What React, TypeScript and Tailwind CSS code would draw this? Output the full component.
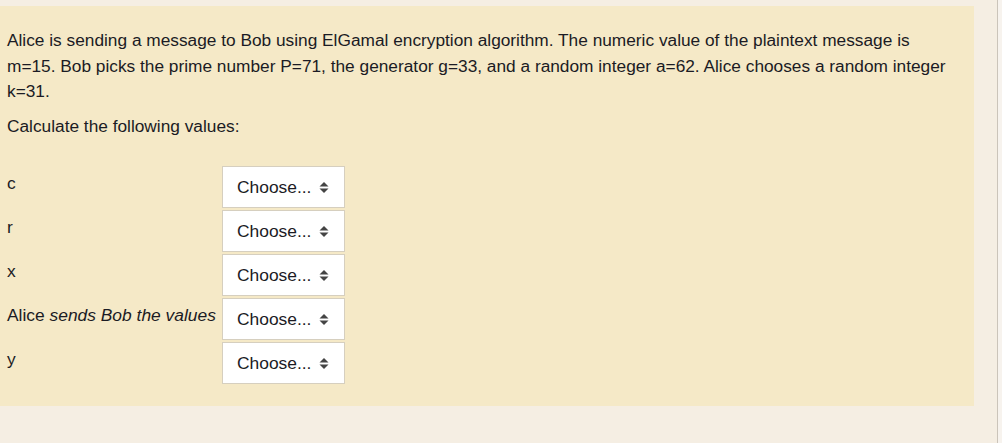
import React from "react";

const rows: { label: React.ReactNode }[] = [
  { label: "c" },
  { label: "r" },
  { label: "x" },
  {
    label: (
      <>
        Alice <em>sends Bob the values</em>
      </>
    ),
  },
  { label: "y" },
];

function Select() {
  return (
    <div className="flex h-[42px] w-[123px] shrink-0 items-center border border-[#d6cfbf] bg-white pl-[14px] text-[17.4px] text-[#1b1b24]">
      <span>Choose...</span>
      <svg width="10" height="13" viewBox="0 0 10 13" className="ml-[8px]">
        <path d="M5 1 L9.5 5.5 L0.5 5.5 Z" fill="#444" />
        <path d="M5 12 L9.5 7.5 L0.5 7.5 Z" fill="#444" />
      </svg>
    </div>
  );
}

export default function App() {
  return (
    <div
      className="flex h-[443px] w-[1002px] bg-[#f5eee3] text-[#1b1b24]"
      style={{ fontFamily: '"Liberation Sans", Arial, sans-serif' }}
    >
      <div className="flex-1 pt-[6px]">
        <div className="w-[974px] bg-[#f5e9c7] pb-[22px] pl-[7px] pt-[22px]">
          <p className="whitespace-nowrap text-[17.3px] leading-[25.5px]">
            Alice is sending a message to Bob using ElGamal encryption algorithm. The numeric value of the plaintext
            message is
            <br />
            m=15. Bob picks the prime number P=71, the generator g=33, and a random integer a=62. Alice chooses a
            random integer
            <br />
            k=31.
          </p>
          <p className="mt-[9px] text-[17.3px] leading-[25.5px]">Calculate the following values:</p>
          <div className="mt-[27px] flex flex-col gap-[2px]">
            {rows.map((r, i) => (
              <div key={i} className="flex items-start">
                <div className="w-[215px] whitespace-nowrap pt-[5px] text-[17.4px] leading-[25px]">{r.label}</div>
                <Select />
              </div>
            ))}
          </div>
        </div>
      </div>
      <div className="w-[1px] bg-[#cbc4ba]" />
      <div className="w-[4px] bg-[#f7f3ee]" />
    </div>
  );
}
